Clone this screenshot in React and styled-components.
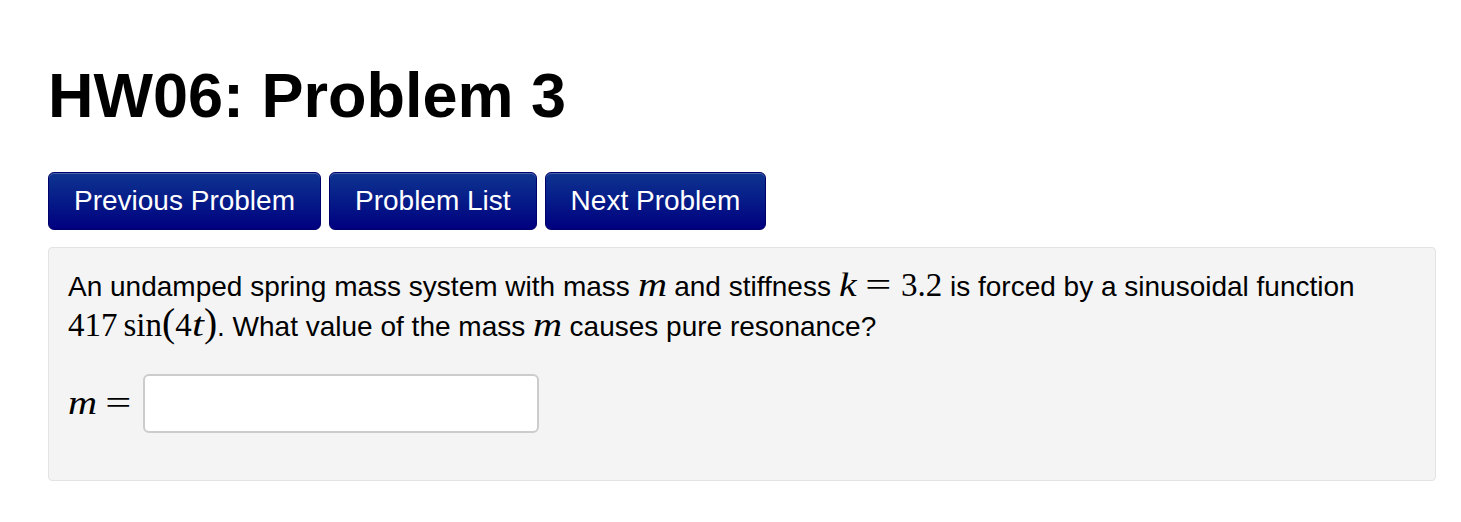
import styled, { createGlobalStyle } from "styled-components";

const GlobalStyle = createGlobalStyle`
  body {
    margin: 0;
    background: #ffffff;
    font-family: "Liberation Sans", Arial, sans-serif;
    color: #000000;
  }
`;

const Page = styled.div`
  padding: 0 25px 0 48px;
`;

const Title = styled.h1`
  margin: 60px 0 42px 0;
  font-size: 63px;
  line-height: 70px;
  font-weight: bold;
`;

const NavBar = styled.div`
  display: flex;
  gap: 8px;
  margin-bottom: 17px;
`;

const NavButton = styled.button`
  height: 58px;
  padding: 0 25px;
  font-family: "Liberation Sans", Arial, sans-serif;
  font-size: 28px;
  color: #ffffff;
  background: linear-gradient(to bottom, #0f348f 0%, #07208a 40%, #00007f 100%);
  border: 1px solid #00006a;
  border-radius: 6px;
  box-shadow: inset 0 1px 0 rgba(255, 255, 255, 0.25);
  cursor: pointer;
`;

const Panel = styled.div`
  background: #f4f4f4;
  border: 1px solid #e3e3e3;
  border-radius: 4px;
  padding: 19px 19px 47px 19px;
`;

const Question = styled.p`
  margin: 0;
  font-size: 28px;
  line-height: 40px;
`;

const Math = styled.span`
  font-family: "Liberation Serif", "Times New Roman", serif;
  font-size: 33px;
  line-height: 1;
`;

/* math italic letters are wider than Times italic: stretch the glyph and make room */
const Var = styled.i`
  display: inline-block;
  font-family: "Liberation Serif", "Times New Roman", serif;
  font-style: italic;
  transform: scaleX(${(p) => p.$sx || 1});
  transform-origin: left center;
  margin-right: ${(p) => p.$extra || 0}px;
`;

const Eq = styled.span`
  display: inline-block;
  margin: 0 ${(p) => p.$space || 13}px;
  transform: scaleX(1.4);
`;

const Gap = styled.span`
  display: inline-block;
  width: ${(p) => p.$w}px;
`;

const Paren = styled.span`
  font-size: 1.2em;
  line-height: 0;
`;

const AnswerRow = styled.div`
  display: flex;
  align-items: center;
  margin-top: 27px;
`;

const AnswerInput = styled.input`
  width: 396px;
  height: 59px;
  box-sizing: border-box;
  margin-left: 4px;
  background: #ffffff;
  border: 2px solid #cccccc;
  border-radius: 6px;
  font-size: 28px;
  padding: 0 10px;
`;

function App() {
  return (
    <Page>
      <GlobalStyle />
      <Title>HW06: Problem 3</Title>
      <NavBar>
        <NavButton>Previous Problem</NavButton>
        <NavButton>Problem List</NavButton>
        <NavButton>Next Problem</NavButton>
      </NavBar>
      <Panel>
        <Question>
          An undamped spring mass system with mass{" "}
          <Math><Var $sx={1.22} $extra={5}>m</Var></Math> and stiffness{" "}
          <Math>
            <Var $sx={1.2} $extra={3}>k</Var>
            <Eq>=</Eq>3.2
          </Math>{" "}
          is forced by a sinusoidal function
          <br />
          <Math>
            417<Gap $w={6} />sin<Paren>(</Paren>4<Var $sx={1.3} $extra={3}>t</Var><Paren>)</Paren>
          </Math>
          . What value of the mass <Math><Var $sx={1.22} $extra={5}>m</Var></Math> causes pure resonance?
        </Question>
        <AnswerRow>
          <Math>
            <Var $sx={1.22} $extra={5}>m</Var>
            <Eq $space={12}>=</Eq>
          </Math>
          <AnswerInput type="text" />
        </AnswerRow>
      </Panel>
    </Page>
  );
}

export default App;
